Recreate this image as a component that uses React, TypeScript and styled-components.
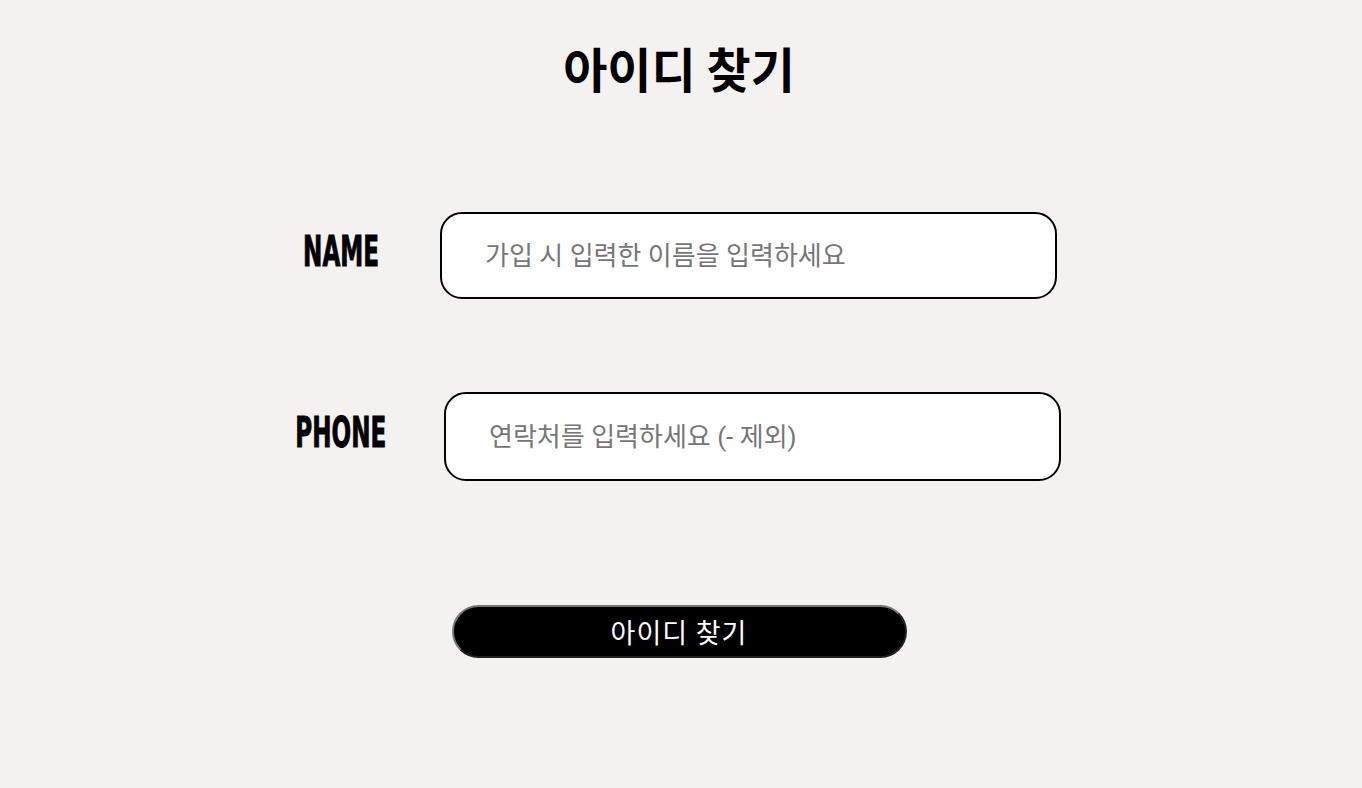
import React from "react";
import styled, { createGlobalStyle } from "styled-components";

const GlobalStyle = createGlobalStyle`
  body {
    margin: 0;
    background: #f4f2f1;
    font-family: "Noto Sans CJK KR", "Noto Sans", sans-serif;
  }
`;

const Page = styled.div`
  display: flex;
  flex-direction: column;
  align-items: center;
  min-height: 788px;
  padding: 35px 4px 0 0;
  box-sizing: border-box;
`;

const Title = styled.h1`
  margin: 0;
  font-size: 48px;
  font-weight: 700;
  line-height: 64px;
  color: #000;
`;

const Form = styled.form`
  display: flex;
  flex-direction: column;
  align-items: center;
  margin-top: 113px;
`;

const Row = styled.div<{ $mt?: number }>`
  display: flex;
  align-items: center;
  gap: 59px;
  margin-top: ${(p) => p.$mt ?? 0}px;
`;

const LabelBox = styled.div<{ $w?: number }>`
  width: ${(p) => p.$w ?? 80}px;
  display: flex;
  justify-content: center;
  margin-top: -8px;
`;

const Label = styled.label`
  display: inline-block;
  font-family: "DejaVu Sans", sans-serif;
  font-weight: 900;
  font-size: 42px;
  line-height: 42px;
  white-space: nowrap;
  color: #000;
  transform: scaleX(0.55);
  transform-origin: center;
  -webkit-text-stroke: 1px #000;
`;

const Input = styled.input<{ $h?: number }>`
  width: 617px;
  height: ${(p) => p.$h ?? 87}px;
  box-sizing: border-box;
  border: 2px solid #000;
  border-radius: 22px;
  background: #fff;
  padding: 0 43px;
  font-family: "Roboto", "Noto Sans CJK KR", sans-serif;
  font-size: 26px;
  color: #000;
  outline: none;
  &::placeholder {
    color: #767676;
  }
`;

const Submit = styled.button`
  margin-top: 124px;
  width: 455px;
  height: 53px;
  border-radius: 27px;
  border: 2px outset #767676;
  background: #000;
  color: #fff;
  font-family: "Roboto", "Noto Sans CJK KR", sans-serif;
  font-size: 27px;
  letter-spacing: 1px;
  cursor: pointer;
`;

export default function App() {
  return (
    <>
      <GlobalStyle />
      <Page>
        <Title>아이디 찾기</Title>
        <Form onSubmit={(e) => e.preventDefault()}>
          <Row>
            <LabelBox>
              <Label htmlFor="name">NAME</Label>
            </LabelBox>
            <Input id="name" placeholder="가입 시 입력한 이름을 입력하세요" />
          </Row>
          <Row $mt={93}>
            <LabelBox $w={88}>
              <Label htmlFor="phone">PHONE</Label>
            </LabelBox>
            <Input id="phone" $h={89} placeholder="연락처를 입력하세요 (- 제외)" />
          </Row>
          <Submit type="submit">아이디 찾기</Submit>
        </Form>
      </Page>
    </>
  );
}
